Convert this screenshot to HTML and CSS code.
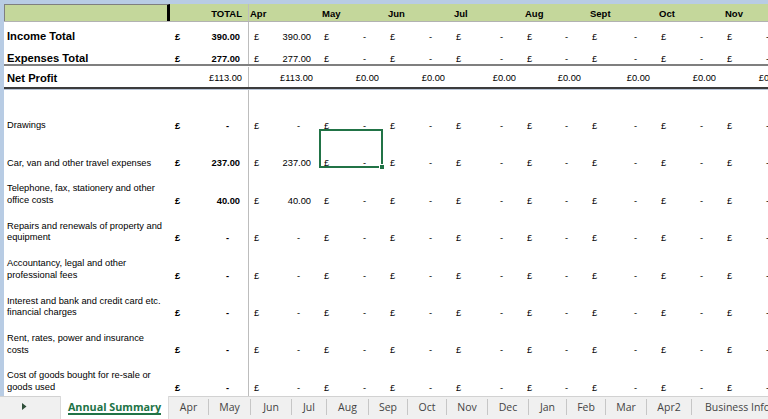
FILE: index.html
```html
<!DOCTYPE html>
<html>
<head>
<meta charset="utf-8">
<link rel="stylesheet" href="styles.css">
</head>
<body>
<div class="sheet">
  <div class="band"></div>
  <div class="main">
    <div class="stripe"></div>
    <div class="grid">
      <div class="row hd">
        <div class="lbl first"></div>
        <div class="tot">TOTAL</div>
        <div class="c apr">Apr</div>
        <div class="c">May</div>
        <div class="c">Jun</div>
        <div class="c">Jul</div>
        <div class="c">Aug</div>
        <div class="c">Sept</div>
        <div class="c">Oct</div>
        <div class="c">Nov</div>
      </div>

      <div class="row big inc">
        <div class="lbl"><span>Income Total</span></div>
        <div class="tot m b"><span class="p">£</span><span class="v">390.00</span></div>
        <div class="c m"><span class="p">£</span><span class="v">390.00</span></div>
        <div class="c m"><span class="p">£</span><span class="d">-</span></div>
        <div class="c m"><span class="p">£</span><span class="d">-</span></div>
        <div class="c m"><span class="p">£</span><span class="d">-</span></div>
        <div class="c m"><span class="p">£</span><span class="d">-</span></div>
        <div class="c m"><span class="p">£</span><span class="d">-</span></div>
        <div class="c m"><span class="p">£</span><span class="d">-</span></div>
        <div class="c m"><span class="p">£</span><span class="d">-</span></div>
      </div>

      <div class="row big exp">
        <div class="lbl"><span>Expenses Total</span></div>
        <div class="tot m b"><span class="p">£</span><span class="v">277.00</span></div>
        <div class="c m"><span class="p">£</span><span class="v">277.00</span></div>
        <div class="c m"><span class="p">£</span><span class="d">-</span></div>
        <div class="c m"><span class="p">£</span><span class="d">-</span></div>
        <div class="c m"><span class="p">£</span><span class="d">-</span></div>
        <div class="c m"><span class="p">£</span><span class="d">-</span></div>
        <div class="c m"><span class="p">£</span><span class="d">-</span></div>
        <div class="c m"><span class="p">£</span><span class="d">-</span></div>
        <div class="c m"><span class="p">£</span><span class="d">-</span></div>
      </div>

      <div class="row big net">
        <div class="lbl"><span>Net Profit</span></div>
        <div class="tot n"><span>£113.00</span></div>
        <div class="c n"><span>£113.00</span></div>
        <div class="c n"><span>£0.00</span></div>
        <div class="c n"><span>£0.00</span></div>
        <div class="c n"><span>£0.00</span></div>
        <div class="c n"><span>£0.00</span></div>
        <div class="c n"><span>£0.00</span></div>
        <div class="c n"><span>£0.00</span></div>
        <div class="c n"><span>£0.00</span></div>
      </div>

      <div class="row dr draw">
        <div class="lbl"><span>Drawings</span></div>
        <div class="tot m b"><span class="p">£</span><span class="d">-</span></div>
        <div class="c m"><span class="p">£</span><span class="d">-</span></div>
        <div class="c m"><span class="p">£</span><span class="d">-</span></div>
        <div class="c m"><span class="p">£</span><span class="d">-</span></div>
        <div class="c m"><span class="p">£</span><span class="d">-</span></div>
        <div class="c m"><span class="p">£</span><span class="d">-</span></div>
        <div class="c m"><span class="p">£</span><span class="d">-</span></div>
        <div class="c m"><span class="p">£</span><span class="d">-</span></div>
        <div class="c m"><span class="p">£</span><span class="d">-</span></div>
      </div>

      <div class="row dr">
        <div class="lbl"><span>Car, van and other travel expenses</span></div>
        <div class="tot m b"><span class="p">£</span><span class="v">237.00</span></div>
        <div class="c m"><span class="p">£</span><span class="v">237.00</span></div>
        <div class="c m sel"><span class="p">£</span><span class="d">-</span><i class="selbox"><b class="handle"></b></i></div>
        <div class="c m"><span class="p">£</span><span class="d">-</span></div>
        <div class="c m"><span class="p">£</span><span class="d">-</span></div>
        <div class="c m"><span class="p">£</span><span class="d">-</span></div>
        <div class="c m"><span class="p">£</span><span class="d">-</span></div>
        <div class="c m"><span class="p">£</span><span class="d">-</span></div>
        <div class="c m"><span class="p">£</span><span class="d">-</span></div>
      </div>

      <div class="row dr">
        <div class="lbl"><span>Telephone, fax, stationery and other<br>office costs</span></div>
        <div class="tot m b"><span class="p">£</span><span class="v">40.00</span></div>
        <div class="c m"><span class="p">£</span><span class="v">40.00</span></div>
        <div class="c m"><span class="p">£</span><span class="d">-</span></div>
        <div class="c m"><span class="p">£</span><span class="d">-</span></div>
        <div class="c m"><span class="p">£</span><span class="d">-</span></div>
        <div class="c m"><span class="p">£</span><span class="d">-</span></div>
        <div class="c m"><span class="p">£</span><span class="d">-</span></div>
        <div class="c m"><span class="p">£</span><span class="d">-</span></div>
        <div class="c m"><span class="p">£</span><span class="d">-</span></div>
      </div>

      <div class="row dr">
        <div class="lbl"><span>Repairs and renewals of property and<br>equipment</span></div>
        <div class="tot m b"><span class="p">£</span><span class="d">-</span></div>
        <div class="c m"><span class="p">£</span><span class="d">-</span></div>
        <div class="c m"><span class="p">£</span><span class="d">-</span></div>
        <div class="c m"><span class="p">£</span><span class="d">-</span></div>
        <div class="c m"><span class="p">£</span><span class="d">-</span></div>
        <div class="c m"><span class="p">£</span><span class="d">-</span></div>
        <div class="c m"><span class="p">£</span><span class="d">-</span></div>
        <div class="c m"><span class="p">£</span><span class="d">-</span></div>
        <div class="c m"><span class="p">£</span><span class="d">-</span></div>
      </div>

      <div class="row dr">
        <div class="lbl"><span>Accountancy, legal and other<br>professional fees</span></div>
        <div class="tot m b"><span class="p">£</span><span class="d">-</span></div>
        <div class="c m"><span class="p">£</span><span class="d">-</span></div>
        <div class="c m"><span class="p">£</span><span class="d">-</span></div>
        <div class="c m"><span class="p">£</span><span class="d">-</span></div>
        <div class="c m"><span class="p">£</span><span class="d">-</span></div>
        <div class="c m"><span class="p">£</span><span class="d">-</span></div>
        <div class="c m"><span class="p">£</span><span class="d">-</span></div>
        <div class="c m"><span class="p">£</span><span class="d">-</span></div>
        <div class="c m"><span class="p">£</span><span class="d">-</span></div>
      </div>

      <div class="row dr">
        <div class="lbl"><span>Interest and bank and credit card etc.<br>financial charges</span></div>
        <div class="tot m b"><span class="p">£</span><span class="d">-</span></div>
        <div class="c m"><span class="p">£</span><span class="d">-</span></div>
        <div class="c m"><span class="p">£</span><span class="d">-</span></div>
        <div class="c m"><span class="p">£</span><span class="d">-</span></div>
        <div class="c m"><span class="p">£</span><span class="d">-</span></div>
        <div class="c m"><span class="p">£</span><span class="d">-</span></div>
        <div class="c m"><span class="p">£</span><span class="d">-</span></div>
        <div class="c m"><span class="p">£</span><span class="d">-</span></div>
        <div class="c m"><span class="p">£</span><span class="d">-</span></div>
      </div>

      <div class="row dr">
        <div class="lbl"><span>Rent, rates, power and insurance<br>costs</span></div>
        <div class="tot m b"><span class="p">£</span><span class="d">-</span></div>
        <div class="c m"><span class="p">£</span><span class="d">-</span></div>
        <div class="c m"><span class="p">£</span><span class="d">-</span></div>
        <div class="c m"><span class="p">£</span><span class="d">-</span></div>
        <div class="c m"><span class="p">£</span><span class="d">-</span></div>
        <div class="c m"><span class="p">£</span><span class="d">-</span></div>
        <div class="c m"><span class="p">£</span><span class="d">-</span></div>
        <div class="c m"><span class="p">£</span><span class="d">-</span></div>
        <div class="c m"><span class="p">£</span><span class="d">-</span></div>
      </div>

      <div class="row dr">
        <div class="lbl"><span>Cost of goods bought for re-sale or<br>goods used</span></div>
        <div class="tot m b"><span class="p">£</span><span class="d">-</span></div>
        <div class="c m"><span class="p">£</span><span class="d">-</span></div>
        <div class="c m"><span class="p">£</span><span class="d">-</span></div>
        <div class="c m"><span class="p">£</span><span class="d">-</span></div>
        <div class="c m"><span class="p">£</span><span class="d">-</span></div>
        <div class="c m"><span class="p">£</span><span class="d">-</span></div>
        <div class="c m"><span class="p">£</span><span class="d">-</span></div>
        <div class="c m"><span class="p">£</span><span class="d">-</span></div>
        <div class="c m"><span class="p">£</span><span class="d">-</span></div>
      </div>

      <div class="row dr">
        <div class="lbl"><span>&nbsp;</span></div>
        <div class="tot"></div>
      </div>
    </div>
  </div>
</div>
<div class="tabs">
  <div class="nav"><svg width="5" height="7" viewBox="0 0 5 7"><polygon points="0,0 4.5,3.5 0,7" fill="#2f4f3a"/></svg></div>
  <div class="tab active"><span>Annual Summary</span></div>
  <div class="tab w39">Apr</div><i class="sep"></i>
  <div class="tab w41">May</div><i class="sep"></i>
  <div class="tab w40">Jun</div><i class="sep"></i>
  <div class="tab w34">Jul</div><i class="sep"></i>
  <div class="tab w41">Aug</div><i class="sep"></i>
  <div class="tab w38">Sep</div><i class="sep"></i>
  <div class="tab w38">Oct</div><i class="sep"></i>
  <div class="tab w40">Nov</div><i class="sep"></i>
  <div class="tab w40">Dec</div><i class="sep"></i>
  <div class="tab w37">Jan</div><i class="sep"></i>
  <div class="tab w38">Feb</div><i class="sep"></i>
  <div class="tab w40">Mar</div><i class="sep"></i>
  <div class="tab w44">Apr2</div><i class="sep"></i>
  <div class="tab last">Business Info</div>
</div>
</body>
</html>
```

FILE: styles.css
```css
* { box-sizing: border-box; margin: 0; padding: 0; }

html, body {
  width: 768px;
  height: 419px;
  overflow: hidden;
  background: #ffffff;
}

body {
  font-family: "Liberation Sans", Arial, sans-serif;
  color: #000;
}

.sheet {
  height: 396px;
  display: flex;
  flex-direction: column;
  overflow: hidden;
}

.band {
  height: 4px;
  flex: none;
  background: #b8cce4;
}

.main {
  flex: 1;
  display: flex;
  min-height: 0;
}

.stripe {
  width: 4px;
  flex: none;
  background: #b8cce4;
}

.grid {
  flex: 1;
  min-width: 0;
  display: flex;
  flex-direction: column;
  overflow: hidden;
}

.row {
  flex: none;
  display: grid;
  grid-template-columns: 166px 79px 70px 66px 66px 71px 65px 69px 66px 66px;
  font-size: 9.3px;
  line-height: 12px;
  white-space: nowrap;
}

.row > div {
  display: flex;
  align-items: flex-end;
}

.tot {
  border-right: 1px solid #bdbdbd;
}

/* header */
.hd {
  height: 18px;
  background: #c4d79b;
  border-bottom: 1px solid #b2b2b2;
  font-weight: bold;
  font-size: 9.5px;
}
.hd > div {
  align-items: flex-start;
  padding-top: 3px;
  line-height: 14px;
}
.hd .first {
  border-top: 1px solid #7f7f7f;
  border-left: 1px solid #7f7f7f;
  border-right: 3px solid #000;
}
.hd .tot {
  justify-content: flex-end;
  padding-right: 6px;
}
.hd .c { padding-left: 3px; }
.hd .c.apr { padding-left: 1px; }

/* labels */
.lbl {
  padding-left: 3px;
  line-height: 11.7px;
}
.big .lbl {
  font-weight: bold;
  font-size: 11.2px;
  line-height: 13px;
}

/* money cells */
.m {
  justify-content: space-between;
}
.m .p { padding-left: 5px; }
.m .v { padding-right: 8px; }
.m .d { padding-right: 19px; }
.b { font-weight: bold; }

.n {
  justify-content: flex-end;
  padding-right: 6px;
}

/* row heights */
.inc { height: 19px; }
.inc > div > span { margin-bottom: -1.5px; }
.exp {
  height: 25px;
  border-bottom: 2px solid #7f7f7f;
}
.exp > div > span { margin-bottom: -1px; }
.net {
  height: 22px;
  margin-top: 1px;
  border-bottom: 2px solid #3c3c3c;
}
.net .lbl { padding-bottom: 2px; line-height: 14px; }
.net .n { padding-bottom: 3px; }

.dr {
  height: 37.4px;
}
.dr > div > span { margin-bottom: -2px; }
.draw {
  height: 41px;
  border-top: 1px solid #b8c4d6;
}

/* selection */
.sel { position: relative; }
.selbox {
  position: absolute;
  left: 0;
  right: 2px;
  top: -1px;
  bottom: -1px;
  border: 2px solid #217346;
}
.handle {
  position: absolute;
  right: -4px;
  bottom: -4px;
  width: 6px;
  height: 6px;
  background: #217346;
  border: 1px solid #fff;
}

/* tabs */
.tabs {
  height: 23px;
  background: #f0f0f0;
  border-top: 1px solid #d2d2d2;
  display: flex;
  padding-bottom: 3px;
  font-family: "Open Sans", "Noto Sans", "DejaVu Sans", sans-serif;
  font-size: 10.5px;
  color: #444;
  white-space: nowrap;
}
.nav {
  width: 60px;
  flex: none;
  display: flex;
  align-items: center;
  padding-left: 22px;
}
.tab {
  flex: none;
  display: flex;
  align-items: center;
  justify-content: center;
}
.tab.active {
  width: 109px;
  margin-top: -1px;
  margin-bottom: -3px;
  padding-bottom: 3px;
  background: #fff;
  color: #217346;
  font-weight: bold;
  font-size: 10.8px;
  border-left: 1px solid #dadada;
  border-right: 1px solid #dadada;
}
.tab.active span {
  padding-top: 3px;
  border-bottom: 2px solid #217346;
  line-height: 13px;
}
.sep {
  flex: none;
  width: 1px;
  height: 16px;
  align-self: center;
  background: #c6c6c6;
}
.w34 { width: 34px; }
.w37 { width: 37px; }
.w38 { width: 38px; }
.w39 { width: 39px; }
.w40 { width: 40px; }
.w41 { width: 41px; }
.w44 { width: 44px; }
.tab.last {
  justify-content: flex-start;
  padding-left: 13px;
}
```
